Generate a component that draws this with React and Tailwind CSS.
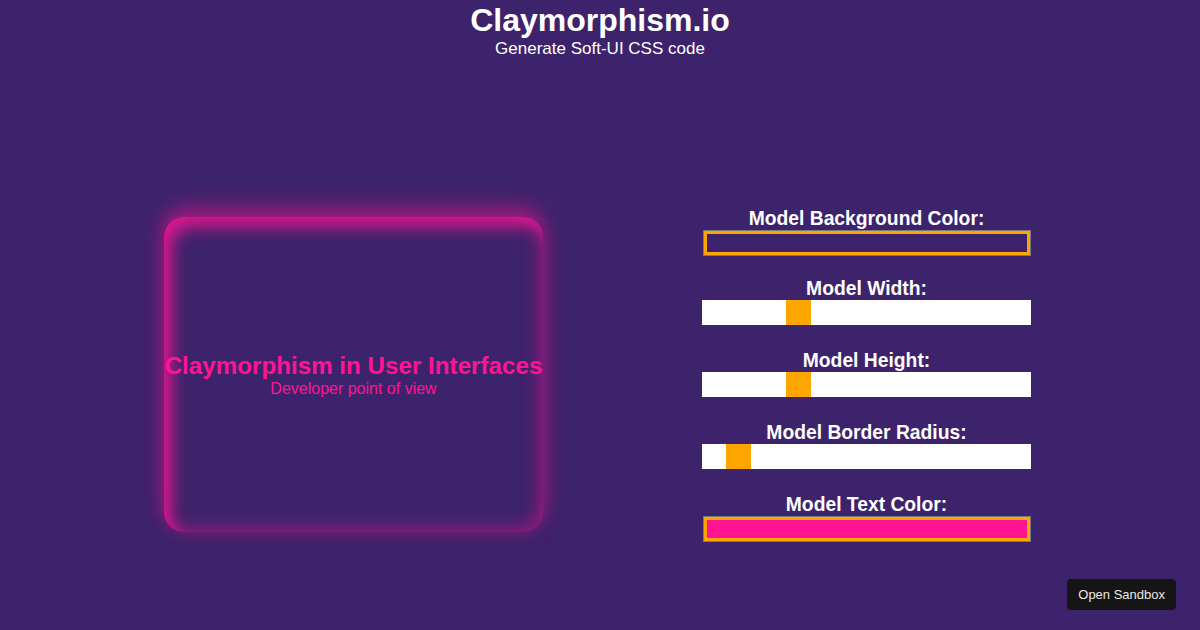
import React from 'react';

const controls = [
  { label: 'Model Background Color:', type: 'color', fill: 'bg-[#3d236b]', box: 'mt-[2px] h-[70px]' },
  { label: 'Model Width:', type: 'range', thumb: 'ml-[84px]', box: 'h-[72px]' },
  { label: 'Model Height:', type: 'range', thumb: 'ml-[84px]', box: 'h-[72px]' },
  { label: 'Model Border Radius:', type: 'range', thumb: 'ml-[24px]', box: 'h-[72px]' },
  { label: 'Model Text Color:', type: 'color', fill: 'bg-[#ff1493]', box: 'h-[72px]' },
];

function ColorBox({ fill }) {
  return (
    <div className="h-[26px] w-[328px] border border-[#7a7a7a]">
      <div className={`h-full w-full border-[3px] border-[#ffa500] ${fill}`} />
    </div>
  );
}

function RangeBar({ thumb }) {
  return (
    <div className="h-[25px] w-[329px] bg-white">
      <div className={`h-[25px] w-[25px] bg-[#ffa500] ${thumb}`} />
    </div>
  );
}

export default function App() {
  return (
    <div className="relative h-[630px] w-[1200px] overflow-hidden bg-[#3d236b] font-['Liberation_Sans',Arial,sans-serif] text-white">
      <header className="flex flex-col items-center pt-[2px]">
        <h1 className="text-[32px] font-bold leading-[36px]">Claymorphism.io</h1>
        <p className="text-[17px] leading-[21px]">Generate Soft-UI CSS code</p>
      </header>

      <main className="mt-[158px] flex items-start">
        <div className="ml-[164px] flex h-[315px] w-[379px] flex-col items-center justify-center rounded-[20px] bg-[#3d236b] text-[#ff1493] shadow-[0_-9px_22px_rgba(255,20,150,0.5),0_0_16px_rgba(255,20,150,0.22),inset_8px_10px_16px_rgba(255,20,150,0.8),inset_-6px_-6px_16px_rgba(255,20,150,0.35)]">
          <h2 className="whitespace-nowrap text-[24.2px] font-bold leading-[27px]">Claymorphism in User Interfaces</h2>
          <p className="text-[16px] leading-[19px]">Developer point of view</p>
        </div>

        <div className="ml-[159px] -mt-[12px] flex w-[329px] flex-col items-center">
          {controls.map((c) => (
            <div key={c.label} className={`flex w-full flex-col items-center ${c.box}`}>
              <label className="text-[19.3px] font-bold leading-[23px]">{c.label}</label>
              {c.type === 'color' ? <ColorBox fill={c.fill} /> : <RangeBar thumb={c.thumb} />}
            </div>
          ))}
        </div>
      </main>

      <button className="absolute bottom-[20px] right-[24px] rounded-[4px] bg-[#151515] px-[11px] py-[7px] text-[13px] leading-[17px] text-[#e8e8e8]">
        Open Sandbox
      </button>
    </div>
  );
}
